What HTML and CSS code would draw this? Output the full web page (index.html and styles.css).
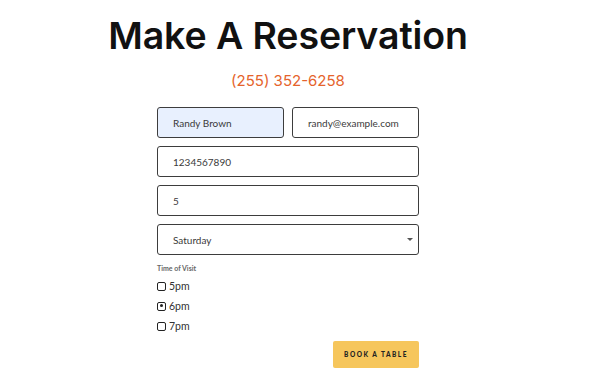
FILE: index.html
```html
<!DOCTYPE html>
<html>
<head>
<meta charset="utf-8">
<link rel="stylesheet" href="styles.css">
</head>
<body>
<main class="page">
  <h1 class="title">Make A Reservation</h1>
  <p class="phone">(255) 352-6258</p>
  <form class="form">
    <div class="row">
      <div class="field autofill">Randy Brown</div>
      <div class="field">randy@example.com</div>
    </div>
    <div class="field">1234567890</div>
    <div class="field">5</div>
    <div class="field select">Saturday<span class="caret"></span></div>
    <div class="label">Time of Visit</div>
    <div class="options">
      <div class="opt"><span class="box"></span>5pm</div>
      <div class="opt"><span class="box checked"></span>6pm</div>
      <div class="opt"><span class="box"></span>7pm</div>
    </div>
    <div class="actions"><button type="button" class="btn">BOOK A TABLE</button></div>
  </form>
</main>
</body>
</html>
```
FILE: styles.css
```css
html, body { margin: 0; padding: 0; background: #fff; }
body { font-family: "Lato", "Open Sans", sans-serif; color: #222; }
.page { width: 576px; display: flex; flex-direction: column; align-items: center; }
.title { margin: 13px 0 0; font-family: "Inter", sans-serif; font-weight: 600; font-size: 37.5px; line-height: 46px; color: #111; letter-spacing: -0.1px; }
.phone { margin: 13px 0 0; font-family: "Inter", sans-serif; font-size: 15px; line-height: 18px; color: #e5632c; }
.form { width: 262px; margin-top: 17px; display: flex; flex-direction: column; gap: 8px; }
.row { display: flex; gap: 8px; }
.row .field { flex: 1; }
.field { box-sizing: border-box; height: 31px; border: 1.5px solid #3d3d3d; border-radius: 3px; padding: 0 15px; display: flex; align-items: center; font-size: 10px; color: #3a3a3a; position: relative; }
.autofill { background: #e8f0fe; }
.select .caret { position: absolute; right: 5px; top: 13px; width: 0; height: 0; border-left: 3px solid transparent; border-right: 3px solid transparent; border-top: 3px solid #555; }
.label { margin-top: 1px; font-size: 7px; font-weight: 700; color: #666; }
.options { display: flex; flex-direction: column; gap: 8px; margin-top: 0; }
.opt { display: flex; align-items: center; gap: 3px; font-size: 10.5px; color: #333; line-height: 12px; }
.box { box-sizing: border-box; width: 9px; height: 9px; border: 1.5px solid #222; border-radius: 2px; position: relative; }
.box.checked::after { content: ""; position: absolute; left: 1.5px; top: 1.5px; width: 3px; height: 3px; background: #222; border-radius: 50%; }
.actions { display: flex; justify-content: flex-end; margin-top: 1px; }
.btn { width: 86px; height: 27px; border: 0; border-radius: 2px; background: #f6c65c; font-family: "Lato", sans-serif; font-weight: 900; font-size: 6.5px; letter-spacing: 1.5px; color: #222; padding: 0; }
```
